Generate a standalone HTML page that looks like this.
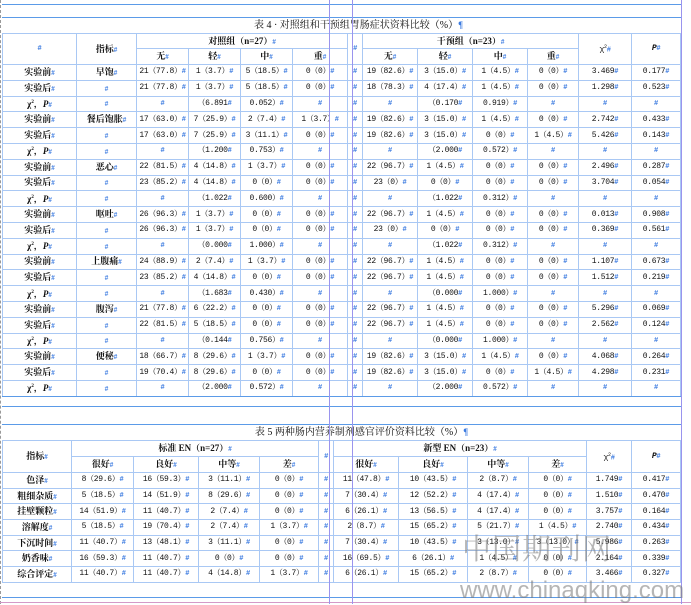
<!DOCTYPE html>
<html><head><meta charset="utf-8"><style>
*{margin:0;padding:0;box-sizing:border-box}
body{width:691px;height:604px;position:relative;overflow:hidden;background:#fff;font-family:"Liberation Serif","Noto Serif CJK SC",serif;color:#111}
.h{position:absolute;left:2px;width:679px;height:0;border-top:1px solid #5b9be8}
.v{position:absolute;top:0;height:604px;width:0;border-left:1px solid #9a94ee}
table{position:absolute;border-collapse:collapse;table-layout:fixed}
td{border:1px solid #a9c8f4;text-align:center;font-size:8px;white-space:nowrap;overflow:hidden;padding:0;line-height:10px;font-family:"Liberation Mono","Noto Serif CJK SC",monospace;letter-spacing:-0.3px}
td.c{font-size:9px;font-weight:bold;font-family:"Liberation Serif","Noto Serif CJK SC",serif;letter-spacing:0}
i{font-style:normal;color:#3c7be0;font-size:7px;font-weight:bold}
.t{position:absolute;left:2px;width:679px;text-align:center;font-size:10px;font-family:"Liberation Serif","Noto Serif CJK SC",serif}
.wm{position:absolute;color:rgba(120,120,120,.55);font-family:"Liberation Sans","Noto Sans CJK SC",sans-serif}
</style></head><body>
<div style="position:absolute;left:0;top:0;width:2px;height:604px;border-left:1px dashed #999"></div>
<div class="h" style="top:4px"></div>
<div class="h" style="top:17px"></div>
<div class="t" style="top:17px;height:16px;line-height:16px;padding-left:34px">表 4 · 对照组和干预组胃肠症状资料比较（%）<i style="font-size:9px">¶</i></div>
<table style="left:2px;top:33px;width:678px">
<colgroup><col style="width:74px"><col style="width:60px"><col style="width:52px"><col style="width:52px"><col style="width:52px"><col style="width:55px"><col style="width:15px"><col style="width:55px"><col style="width:55px"><col style="width:55px"><col style="width:51px"><col style="width:53px"><col style="width:49px"></colgroup>
<tr style="height:15px"><td rowspan="2"><i>#</i></td><td rowspan="2" class="c">指标<i>#</i></td><td colspan="4" class="c">对照组（n=27）<i>#</i></td><td rowspan="2"><i>#</i></td><td colspan="4" class="c">干预组（n=23）<i>#</i></td><td rowspan="2">χ<sup style="font-size:5px">2</sup><i>#</i></td><td rowspan="2"><b><i style="color:#111;font-style:italic;font-size:8px">P</i></b><i>#</i></td></tr>
<tr style="height:16px"><td class="c">无<i>#</i></td><td class="c">轻<i>#</i></td><td class="c">中<i>#</i></td><td class="c">重<i>#</i></td><td class="c">无<i>#</i></td><td class="c">轻<i>#</i></td><td class="c">中<i>#</i></td><td class="c">重<i>#</i></td></tr>
</table>
<table id="t4" style="left:2px;top:64px;width:678px">
<colgroup><col style="width:74px"><col style="width:60px"><col style="width:52px"><col style="width:52px"><col style="width:52px"><col style="width:55px"><col style="width:15px"><col style="width:55px"><col style="width:55px"><col style="width:55px"><col style="width:51px"><col style="width:53px"><col style="width:49px"></colgroup>
</table>
<div class="h" style="top:396px"></div>
<div class="h" style="top:406px"></div>
<div class="h" style="top:424px"></div>
<div class="t" style="top:424px;height:16px;line-height:16px;padding-left:40px">表 5 两种肠内营养制剂感官评价资料比较（%）<i style="font-size:9px">¶</i></div>
<table style="left:2px;top:440px;width:678px">
<colgroup><col style="width:69px"><col style="width:62px"><col style="width:65px"><col style="width:61px"><col style="width:59px"><col style="width:15px"><col style="width:65px"><col style="width:69px"><col style="width:61px"><col style="width:58px"><col style="width:45px"><col style="width:49px"></colgroup>
<tr style="height:16px"><td rowspan="2" class="c">指标<i>#</i></td><td colspan="4" class="c">标准 EN（n=27）<i>#</i></td><td rowspan="2"><i>#</i></td><td colspan="4" class="c">新型 EN（n=23）<i>#</i></td><td rowspan="2">χ<sup style="font-size:5px">2</sup><i>#</i></td><td rowspan="2"><i style="color:#111;font-style:italic;font-size:8px">P</i><i>#</i></td></tr>
<tr style="height:16px"><td class="c">很好<i>#</i></td><td class="c">良好<i>#</i></td><td class="c">中等<i>#</i></td><td class="c">差<i>#</i></td><td class="c">很好<i>#</i></td><td class="c">良好<i>#</i></td><td class="c">中等<i>#</i></td><td class="c">差<i>#</i></td></tr>
</table>
<table id="t5" style="left:2px;top:472px;width:678px">
<colgroup><col style="width:69px"><col style="width:62px"><col style="width:65px"><col style="width:61px"><col style="width:59px"><col style="width:15px"><col style="width:65px"><col style="width:69px"><col style="width:61px"><col style="width:58px"><col style="width:45px"><col style="width:49px"></colgroup>
</table>
<div class="h" style="top:597px"></div>
<div style="position:absolute;left:0;top:602px;width:691px;border-top:1px solid #d49ac8"></div>
<div class="v" style="left:329px"></div>
<div class="v" style="left:352px"></div>
<div class="v" style="left:681px"></div>
<div class="wm" style="left:462px;top:527px;font-size:29px;letter-spacing:1px;font-family:'Noto Serif CJK SC',serif">中国期刊网</div>
<div class="wm" style="left:460px;top:577px;font-size:24px">www.chinaqking.com</div>
<script>
function c(s){return s===''?'<i>#</i>':s+'<i>#</i>'}
var d4=[
['实验前','早饱','21（77.8）','1（3.7）','5（18.5）','0（0）','19（82.6）','3（15.0）','1（4.5）','0（0）','3.469','0.177'],
['实验后','','21（77.8）','1（3.7）','5（18.5）','0（0）','18（78.3）','4（17.4）','1（4.5）','0（0）','1.298','0.523'],
['X','','','（6.891','0.052）','','','（0.170','0.919）','','',''],
['实验前','餐后饱胀','17（63.0）','7（25.9）','2（7.4）','1（3.7）','19（82.6）','3（15.0）','1（4.5）','0（0）','2.742','0.433'],
['实验后','','17（63.0）','7（25.9）','3（11.1）','0（0）','19（82.6）','3（15.0）','0（0）','1（4.5）','5.426','0.143'],
['X','','','（1.200','0.753）','','','（2.000','0.572）','','',''],
['实验前','恶心','22（81.5）','4（14.8）','1（3.7）','0（0）','22（96.7）','1（4.5）','0（0）','0（0）','2.496','0.287'],
['实验后','','23（85.2）','4（14.8）','0（0）','0（0）','23（0）','0（0）','0（0）','0（0）','3.704','0.054'],
['X','','','（1.022','0.600）','','','（1.022','0.312）','','',''],
['实验前','呕吐','26（96.3）','1（3.7）','0（0）','0（0）','22（96.7）','1（4.5）','0（0）','0（0）','0.013','0.908'],
['实验后','','26（96.3）','1（3.7）','0（0）','0（0）','23（0）','0（0）','0（0）','0（0）','0.369','0.561'],
['X','','','（0.000','1.000）','','','（1.022','0.312）','','',''],
['实验前','上腹痛','24（88.9）','2（7.4）','1（3.7）','0（0）','22（96.7）','1（4.5）','0（0）','0（0）','1.107','0.673'],
['实验后','','23（85.2）','4（14.8）','0（0）','0（0）','22（96.7）','1（4.5）','0（0）','0（0）','1.512','0.219'],
['X','','','（1.683','0.430）','','','（0.000','1.000）','','',''],
['实验前','腹泻','21（77.8）','6（22.2）','0（0）','0（0）','22（96.7）','1（4.5）','0（0）','0（0）','5.296','0.069'],
['实验后','','22（81.5）','5（18.5）','0（0）','0（0）','22（96.7）','1（4.5）','0（0）','0（0）','2.562','0.124'],
['X','','','（0.144','0.756）','','','（0.000','1.000）','','',''],
['实验前','便秘','18（66.7）','8（29.6）','1（3.7）','0（0）','19（82.6）','3（15.0）','1（4.5）','0（0）','4.068','0.264'],
['实验后','','19（70.4）','8（29.6）','0（0）','0（0）','19（82.6）','3（15.0）','0（0）','1（4.5）','4.298','0.231'],
['X','','','（2.000','0.572）','','','（2.000','0.572）','','','']];
var h='';
d4.forEach(function(r){
 h+='<tr style="height:15.8px">';
 var first=r[0]=='X'?'χ<sup style="font-size:5px">2</sup>，<span style="font-style:italic">P</span><i>#</i>':c(r[0]);
 h+='<td class="c">'+first+'</td><td class="c">'+c(r[1])+'</td>';
 for(var k=2;k<6;k++)h+='<td>'+c(r[k])+'</td>';
 h+='<td><i>#</i></td>';
 for(k=6;k<12;k++)h+='<td>'+c(r[k])+'</td>';
 h+='</tr>';
});
document.getElementById('t4').innerHTML+=h;
var d5=[
['色泽','8（29.6）','16（59.3）','3（11.1）','0（0）','11（47.8）','10（43.5）','2（8.7）','0（0）','1.749','0.417'],
['粗细杂质','5（18.5）','14（51.9）','8（29.6）','0（0）','7（30.4）','12（52.2）','4（17.4）','0（0）','1.510','0.470'],
['挂壁颗粒','14（51.9）','11（40.7）','2（7.4）','0（0）','6（26.1）','13（56.5）','4（17.4）','0（0）','3.757','0.164'],
['溶解度','5（18.5）','19（70.4）','2（7.4）','1（3.7）','2（8.7）','15（65.2）','5（21.7）','1（4.5）','2.740','0.434'],
['下沉时间','11（40.7）','13（48.1）','3（11.1）','0（0）','7（30.4）','10（43.5）','3（13.0）','3（13.0）','5.986','0.263'],
['奶香味','16（59.3）','11（40.7）','0（0）','0（0）','16（69.5）','6（26.1）','1（4.5）','0（0）','2.164','0.339'],
['综合评定','11（40.7）','11（40.7）','4（14.8）','1（3.7）','6（26.1）','15（65.2）','2（8.7）','0（0）','3.466','0.327']];
h='';
d5.forEach(function(r){
 h+='<tr style="height:15.7px"><td class="c">'+c(r[0])+'</td>';
 for(var k=1;k<5;k++)h+='<td>'+c(r[k])+'</td>';
 h+='<td><i>#</i></td>';
 for(k=5;k<11;k++)h+='<td>'+c(r[k])+'</td>';
 h+='</tr>';
});
document.getElementById('t5').innerHTML+=h;
</script>
</body></html>
